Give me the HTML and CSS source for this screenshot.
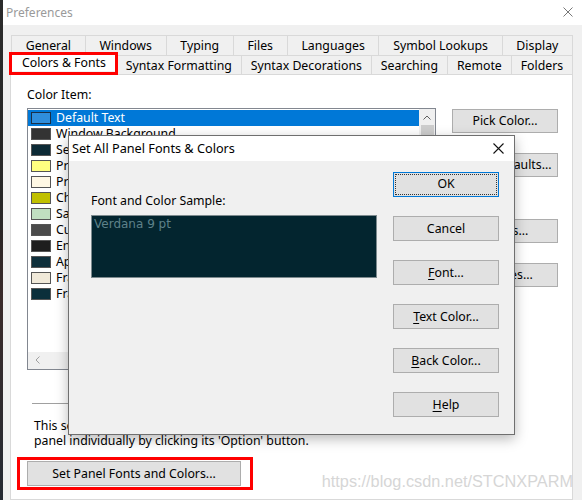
FILE: index.html
```html
<!DOCTYPE html>
<html>
<head>
<meta charset="utf-8">
<title>Preferences</title>
<link rel="stylesheet" href="styles.css">
</head>
<body>
<div class="screen">
  <div class="desk"></div>
  <div class="win">
    <div class="titlebar">
      <span class="title">Preferences</span>
      <svg class="close" viewBox="0 0 10 10" width="10" height="10"><path d="M0.5 0.5L9.5 9.5M9.5 0.5L0.5 9.5" stroke="#777" stroke-width="1" fill="none"/></svg>
    </div>
    <div class="winbody">
      <div class="tabs">
        <div class="tabrow">
          <div class="tab">General</div>
          <div class="tab">Windows</div>
          <div class="tab">Typing</div>
          <div class="tab">Files</div>
          <div class="tab">Languages</div>
          <div class="tab">Symbol Lookups</div>
          <div class="tab">Display</div>
        </div>
        <div class="tabrow">
          <div class="tab sel">Colors &amp; Fonts</div>
          <div class="tab">Syntax Formatting</div>
          <div class="tab">Syntax Decorations</div>
          <div class="tab">Searching</div>
          <div class="tab">Remote</div>
          <div class="tab">Folders</div>
        </div>
      </div>
      <div class="panel">
        <div class="label">Color Item:</div>
        <div class="main">
          <div class="listbox">
            <div class="listarea">
              <ul class="items">
                <li class="item on"><span class="sw c1"></span>Default Text</li>
                <li class="item"><span class="sw c2"></span>Window Background</li>
                <li class="item"><span class="sw c3"></span>Selection Background</li>
                <li class="item"><span class="sw c4"></span>Primary Highlight</li>
                <li class="item"><span class="sw c5"></span>Primary Line Highlight</li>
                <li class="item"><span class="sw c6"></span>Changed Line</li>
                <li class="item"><span class="sw c7"></span>Saved Line</li>
                <li class="item"><span class="sw c8"></span>Current Line</li>
                <li class="item"><span class="sw c9"></span>End of File Area</li>
                <li class="item"><span class="sw c10"></span>Application Background</li>
                <li class="item"><span class="sw c11"></span>Frame Background</li>
                <li class="item"><span class="sw c12"></span>Frame Text</li>
              </ul>
              <div class="vscroll">
                <div class="sbtn"><svg viewBox="0 0 8 5" width="8" height="5"><path d="M0.5 4.5L4 1L7.5 4.5" stroke="#606060" fill="none"/></svg></div>
                <div class="vthumb"></div>
              </div>
            </div>
            <div class="hscroll">
              <div class="sbtn"><svg viewBox="0 0 5 8" width="5" height="8"><path d="M4.5 0.5L1 4L4.5 7.5" stroke="#a0a0a0" fill="none"/></svg></div>
            </div>
          </div>
          <div class="btncol">
            <button class="btn">Pick Color...</button>
            <button class="btn">Reset Defaults...</button>
            <button class="btn far">Colors...</button>
            <button class="btn">Themes...</button>
          </div>
        </div>
        <div class="sep"></div>
        <p class="note">This sets the fonts and colors of all panels. You can also set each<br>panel individually by clicking its 'Option' button.</p>
        <div class="mark">
          <button class="btn setbtn">Set Panel Fonts and Colors...</button>
        </div>
      </div>
    </div>
  </div>

  <div class="dialog">
    <div class="dlg-title">
      <span>Set All Panel Fonts &amp; Colors</span>
      <svg class="dlg-close" viewBox="0 0 11 11" width="11" height="11"><path d="M0.5 0.5L10.5 10.5M10.5 0.5L0.5 10.5" stroke="#111" stroke-width="1.1" fill="none"/></svg>
    </div>
    <div class="dlg-body">
      <div class="sample-col">
        <div class="dlg-label">Font and Color Sample:</div>
        <div class="sample">Verdana 9 pt</div>
      </div>
      <div class="dlg-btns">
        <button class="btn ok"><span>OK</span></button>
        <button class="btn">Cancel</button>
        <button class="btn"><u>F</u>ont...</button>
        <button class="btn"><u>T</u>ext Color...</button>
        <button class="btn"><u>B</u>ack Color...</button>
        <button class="btn"><u>H</u>elp</button>
      </div>
    </div>
  </div>

  <div class="watermark">https://blog.csdn.net/STCNXPARM</div>
</div>
</body>
</html>
```

FILE: styles.css
```css
* { box-sizing: border-box; }

html, body {
  margin: 0;
  padding: 0;
}

body {
  width: 582px;
  height: 500px;
  overflow: hidden;
  font-family: "Noto Sans", "Open Sans", sans-serif;
  font-size: 12.3px;
  color: #000;
  background: #f0f0f0;
}

.screen {
  position: relative;
  display: flex;
  width: 582px;
  height: 500px;
  overflow: hidden;
}

.desk {
  width: 3px;
  flex: none;
  background: linear-gradient(#2b2b2b, #262626 40%, #3a2a2a 60%, #252a33);
}

.win {
  flex: 1;
  display: flex;
  flex-direction: column;
  background: #f0f0f0;
}

/* title bar */
.titlebar {
  height: 25px;
  flex: none;
  background: #fff;
  display: flex;
  align-items: center;
  justify-content: space-between;
  padding: 0 9px 1px 3px;
}

.title {
  color: #9a9a9a;
  font-size: 12px;
}

.close { display: block; }

/* body */
.winbody {
  flex: 1;
  padding: 10px 9px 0 7px;
  display: flex;
  flex-direction: column;
}

.tabs {
  display: flex;
  flex-direction: column;
  position: relative;
  z-index: 2;
}

.tabrow {
  display: flex;
  padding-left: 1px;
}

.tab {
  flex: 1 1 auto;
  height: 20px;
  line-height: 19px;
  padding: 0 6px;
  text-align: center;
  white-space: nowrap;
  border: 1px solid #d9d9d9;
  border-bottom: 0;
  margin-left: -1px;
  background: #f0f0f0;
}

.tab:first-child { margin-left: 0; }

.tabrow + .tabrow .tab { height: 19px; }

.tab.sel {
  position: relative;
  background: #fff;
  height: 23px;
  margin: -3px -1px -1px -1px;
  line-height: 20px;
  padding: 0 8px 2px;
}

.tab.sel::after {
  content: "";
  position: absolute;
  left: -2px;
  top: -1px;
  right: -1px;
  bottom: -4px;
  border: 3px solid #f00;
}

.panel {
  flex: 1;
  background: #fff;
  border: 1px solid #d9d9d9;
  padding: 12px 14px 0 16px;
}

.label {
  line-height: 16px;
  height: 16px;
  margin-bottom: 5px;
}

.main {
  display: flex;
  align-items: flex-start;
}

/* list box */
.listbox {
  width: 409px;
  height: 262px;
  border: 1px solid #828790;
  display: flex;
  flex-direction: column;
}

.listarea {
  flex: 1;
  display: flex;
  min-height: 0;
}

.items {
  flex: 1;
  list-style: none;
  margin: 0;
  padding: 1px 0 0;
}

.item {
  height: 16px;
  display: flex;
  align-items: center;
  white-space: nowrap;
  line-height: 16px;
}

.item.on {
  background: #0078d7;
  color: #fff;
}

.sw {
  width: 20px;
  height: 12px;
  margin: 0 5px 0 3px;
  border: 1px solid #555;
  flex: none;
}

.item.on .sw { border-color: #1b2f45; }

.c1 { background: #2f8edc; }
.c2 { background: #333333; }
.c3 { background: #0c2a35; }
.c4 { background: #ffff80; }
.c5 { background: #fff8e4; }
.c6 { background: #c0c000; }
.c7 { background: #c0dfc0; }
.c8 { background: #4b4b4b; }
.c9 { background: #1e1e1e; }
.c10 { background: #0e2f3b; }
.c11 { background: #f0e9d9; }
.c12 { background: #0b2f3b; }

.vscroll {
  width: 16px;
  flex: none;
  background: #f0f0f0;
  display: flex;
  flex-direction: column;
  align-items: center;
}

.sbtn {
  width: 16px;
  height: 16px;
  flex: none;
  display: flex;
  align-items: center;
  justify-content: center;
}

.sbtn svg { display: block; }

.vthumb {
  width: 13px;
  height: 150px;
  background: #cdcdcd;
}

.hscroll {
  height: 17px;
  flex: none;
  background: #f0f0f0;
  display: flex;
  padding-left: 1px;
}

/* right buttons */
.btncol {
  margin-left: 16px;
  margin-top: 1px;
  display: flex;
  flex-direction: column;
  gap: 20px;
}

.btn {
  display: block;
  width: 106px;
  height: 24px;
  padding: 0;
  font-family: inherit;
  font-size: 12.3px;
  color: #000;
  background: #e1e1e1;
  border: 1px solid #adadad;
  text-align: center;
  line-height: 20px;
}

.btn u { text-decoration-thickness: 1px; text-underline-offset: 2px; }

.btncol .far { margin-top: 22px; }

.sep {
  margin: 33px 0 0 5px;
  width: 460px;
  height: 1px;
  background: #a0a0a0;
}

.note {
  margin: 14px 0 0 7px;
  line-height: 15px;
  white-space: nowrap;
}

.mark {
  display: inline-block;
  margin: 9px 0 0 -10px;
  border: 3px solid #f00;
  padding: 1px 9px 1px 7px;
}

.setbtn {
  width: 214px;
  height: 25px;
}

/* dialog overlay */
.dialog {
  position: absolute;
  left: 68px;
  top: 135px;
  width: 447px;
  height: 300px;
  background: #f0f0f0;
  border: 1px solid #6f6f6f;
  box-shadow: 0 4px 12px rgba(0, 0, 0, 0.28);
  z-index: 5;
  display: flex;
  flex-direction: column;
}

.dlg-title {
  height: 25px;
  flex: none;
  background: #fff;
  display: flex;
  align-items: center;
  justify-content: space-between;
  padding: 0 10px 1px 3px;
  font-size: 12.7px;
}

.dlg-close { display: block; }

.dlg-body {
  flex: 1;
  display: flex;
  align-items: flex-start;
  padding: 11px 0 0 22px;
}

.sample-col {
  width: 286px;
  margin-top: 21px;
}

.dlg-label {
  line-height: 16px;
  margin-bottom: 6px;
}

.sample {
  height: 63px;
  background: #03252f;
  border: 1px solid #7d8a8e;
  color: #5e8189;
  font-family: "DejaVu Sans", Verdana, sans-serif;
  font-size: 12px;
  line-height: 14px;
  padding: 1px 2px;
}

.dlg-btns {
  margin-left: 16px;
  display: flex;
  flex-direction: column;
  gap: 19px;
}

.dlg-btns .btn { height: 25px; line-height: 21px; }

.btn.ok {
  border-color: #0078d7;
  padding: 2px;
  line-height: 17px;
}

.btn.ok span {
  display: block;
  height: 19px;
  outline: 1px dotted #333;
}

.watermark {
  position: absolute;
  right: 9px;
  top: 471px;
  font-family: "Liberation Sans", Arial, sans-serif;
  font-size: 16.3px;
  line-height: 20px;
  color: #d6d6d6;
  z-index: 6;
  white-space: nowrap;
}
```
